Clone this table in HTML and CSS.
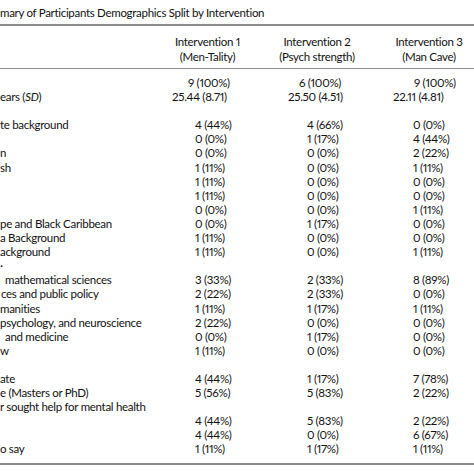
FILE: index.html
```html
<!DOCTYPE html>
<html>
<head>
<meta charset="utf-8">
<link rel="stylesheet" href="styles.css">
</head>
<body>
<div class="page">
  <div class="title">mary of Participants Demographics Split by Intervention</div>
  <table class="tbl">
    <thead>
      <tr>
        <th class="lab"></th>
        <th class="c1">Intervention 1<br>(Men-Tality)</th>
        <th class="c2">Intervention 2<br>(Psych strength)</th>
        <th class="c3">Intervention 3<br>(Man Cave)</th>
      </tr>
    </thead>
    <tbody>
      <tr class="first r-n"><td class="lab"></td><td class="c1">9 (100%)</td><td class="c2">6 (100%)</td><td class="c3">9 (100%)</td></tr>
      <tr class="r-mean"><td class="lab">ears (<i>SD</i>)</td><td class="c1">25.44 (8.71)</td><td class="c2">25.50 (4.51)</td><td class="c3">22.11 (4.81)</td></tr>
      <tr><td class="lab"></td><td class="c1"></td><td class="c2"></td><td class="c3"></td></tr>
      <tr><td class="lab">te background</td><td class="c1">4 (44%)</td><td class="c2">4 (66%)</td><td class="c3">0 (0%)</td></tr>
      <tr><td class="lab"></td><td class="c1">0 (0%)</td><td class="c2">1 (17%)</td><td class="c3">4 (44%)</td></tr>
      <tr><td class="lab">n</td><td class="c1">0 (0%)</td><td class="c2">0 (0%)</td><td class="c3">2 (22%)</td></tr>
      <tr><td class="lab">sh</td><td class="c1">1 (11%)</td><td class="c2">0 (0%)</td><td class="c3">1 (11%)</td></tr>
      <tr><td class="lab"></td><td class="c1">1 (11%)</td><td class="c2">0 (0%)</td><td class="c3">0 (0%)</td></tr>
      <tr><td class="lab"></td><td class="c1">1 (11%)</td><td class="c2">0 (0%)</td><td class="c3">0 (0%)</td></tr>
      <tr><td class="lab"></td><td class="c1">0 (0%)</td><td class="c2">0 (0%)</td><td class="c3">1 (11%)</td></tr>
      <tr><td class="lab">pe and Black Caribbean</td><td class="c1">0 (0%)</td><td class="c2">1 (17%)</td><td class="c3">0 (0%)</td></tr>
      <tr><td class="lab">a Background</td><td class="c1">1 (11%)</td><td class="c2">0 (0%)</td><td class="c3">0 (0%)</td></tr>
      <tr><td class="lab">ackground</td><td class="c1">1 (11%)</td><td class="c2">0 (0%)</td><td class="c3">1 (11%)</td></tr>
      <tr><td class="lab">·</td><td class="c1"></td><td class="c2"></td><td class="c3"></td></tr>
      <tr><td class="lab in5">mathematical sciences</td><td class="c1">3 (33%)</td><td class="c2">2 (33%)</td><td class="c3">8 (89%)</td></tr>
      <tr><td class="lab in1">ces and public policy</td><td class="c1">2 (22%)</td><td class="c2">2 (33%)</td><td class="c3">0 (0%)</td></tr>
      <tr><td class="lab">manities</td><td class="c1">1 (11%)</td><td class="c2">1 (17%)</td><td class="c3">1 (11%)</td></tr>
      <tr><td class="lab">psychology, and neuroscience</td><td class="c1">2 (22%)</td><td class="c2">0 (0%)</td><td class="c3">0 (0%)</td></tr>
      <tr><td class="lab in5">and medicine</td><td class="c1">0 (0%)</td><td class="c2">1 (17%)</td><td class="c3">0 (0%)</td></tr>
      <tr><td class="lab">w</td><td class="c1">1 (11%)</td><td class="c2">0 (0%)</td><td class="c3">0 (0%)</td></tr>
      <tr><td class="lab"></td><td class="c1"></td><td class="c2"></td><td class="c3"></td></tr>
      <tr><td class="lab">ate</td><td class="c1">4 (44%)</td><td class="c2">1 (17%)</td><td class="c3">7 (78%)</td></tr>
      <tr><td class="lab">e (Masters or PhD)</td><td class="c1">5 (56%)</td><td class="c2">5 (83%)</td><td class="c3">2 (22%)</td></tr>
      <tr><td class="lab">r sought help for mental health</td><td class="c1"></td><td class="c2"></td><td class="c3"></td></tr>
      <tr><td class="lab"></td><td class="c1">4 (44%)</td><td class="c2">5 (83%)</td><td class="c3">2 (22%)</td></tr>
      <tr><td class="lab"></td><td class="c1">4 (44%)</td><td class="c2">0 (0%)</td><td class="c3">6 (67%)</td></tr>
      <tr class="last"><td class="lab">o say</td><td class="c1">1 (11%)</td><td class="c2">1 (17%)</td><td class="c3">1 (11%)</td></tr>
    </tbody>
  </table>
</div>
</body>
</html>
```
FILE: styles.css
```css
html, body {
  margin: 0;
  padding: 0;
  background: #ffffff;
  overflow: hidden;
}
.page {
  width: 474px;
  height: 474px;
  overflow: hidden;
  font-family: "Lato", "Open Sans", sans-serif;
  font-size: 11.5px;
  letter-spacing: -0.3px;
  font-variant-numeric: proportional-nums;
  color: #111111;
}
.title {
  margin-top: 6px;
  line-height: 14px;
  white-space: nowrap;
}
.tbl {
  margin-top: 4px;
  width: 474px;
  border-collapse: collapse;
  table-layout: fixed;
  border-top: 2px solid #8c8c8c;
  border-bottom: 2px solid #8c8c8c;
}
.tbl th, .tbl td {
  padding: 0;
  white-space: nowrap;
  font-weight: normal;
  text-align: left;
}
.tbl thead th {
  line-height: 15px;
  padding-top: 8px;
  padding-bottom: 4px;
  border-bottom: 1px solid #8c8c8c;
  text-align: center;
}
.tbl td {
  line-height: 14.1px;
  height: 14.1px;
}
.tbl .first td { padding-top: 7px; }
.tbl .last td { padding-bottom: 6px; }
.lab { width: 165px; overflow: visible; }
.c1 { width: 85px; }
.c2 { width: 110px; }
.c3 { width: 114px; }
.tbl thead th.c1 { padding-right: 12px; }
.tbl thead th.c3 { padding-right: 10px; }
.tbl td.c1 { padding-left: 30px; }
.tbl td.c2 { padding-left: 45px; }
.tbl td.c3 { padding-left: 41px; }
.tbl .r-n td.c1 { padding-left: 23px; }
.tbl .r-n td.c2 { padding-left: 37px; }
.tbl .r-n td.c3 { padding-left: 42px; }
.tbl .r-mean td.c1 { padding-left: 7px; }
.tbl .r-mean td.c2 { padding-left: 26px; }
.tbl .r-mean td.c3 { padding-left: 21px; }
.tbl td.in1 { padding-left: 1px; }
.tbl td.in5 { padding-left: 5px; }
```
